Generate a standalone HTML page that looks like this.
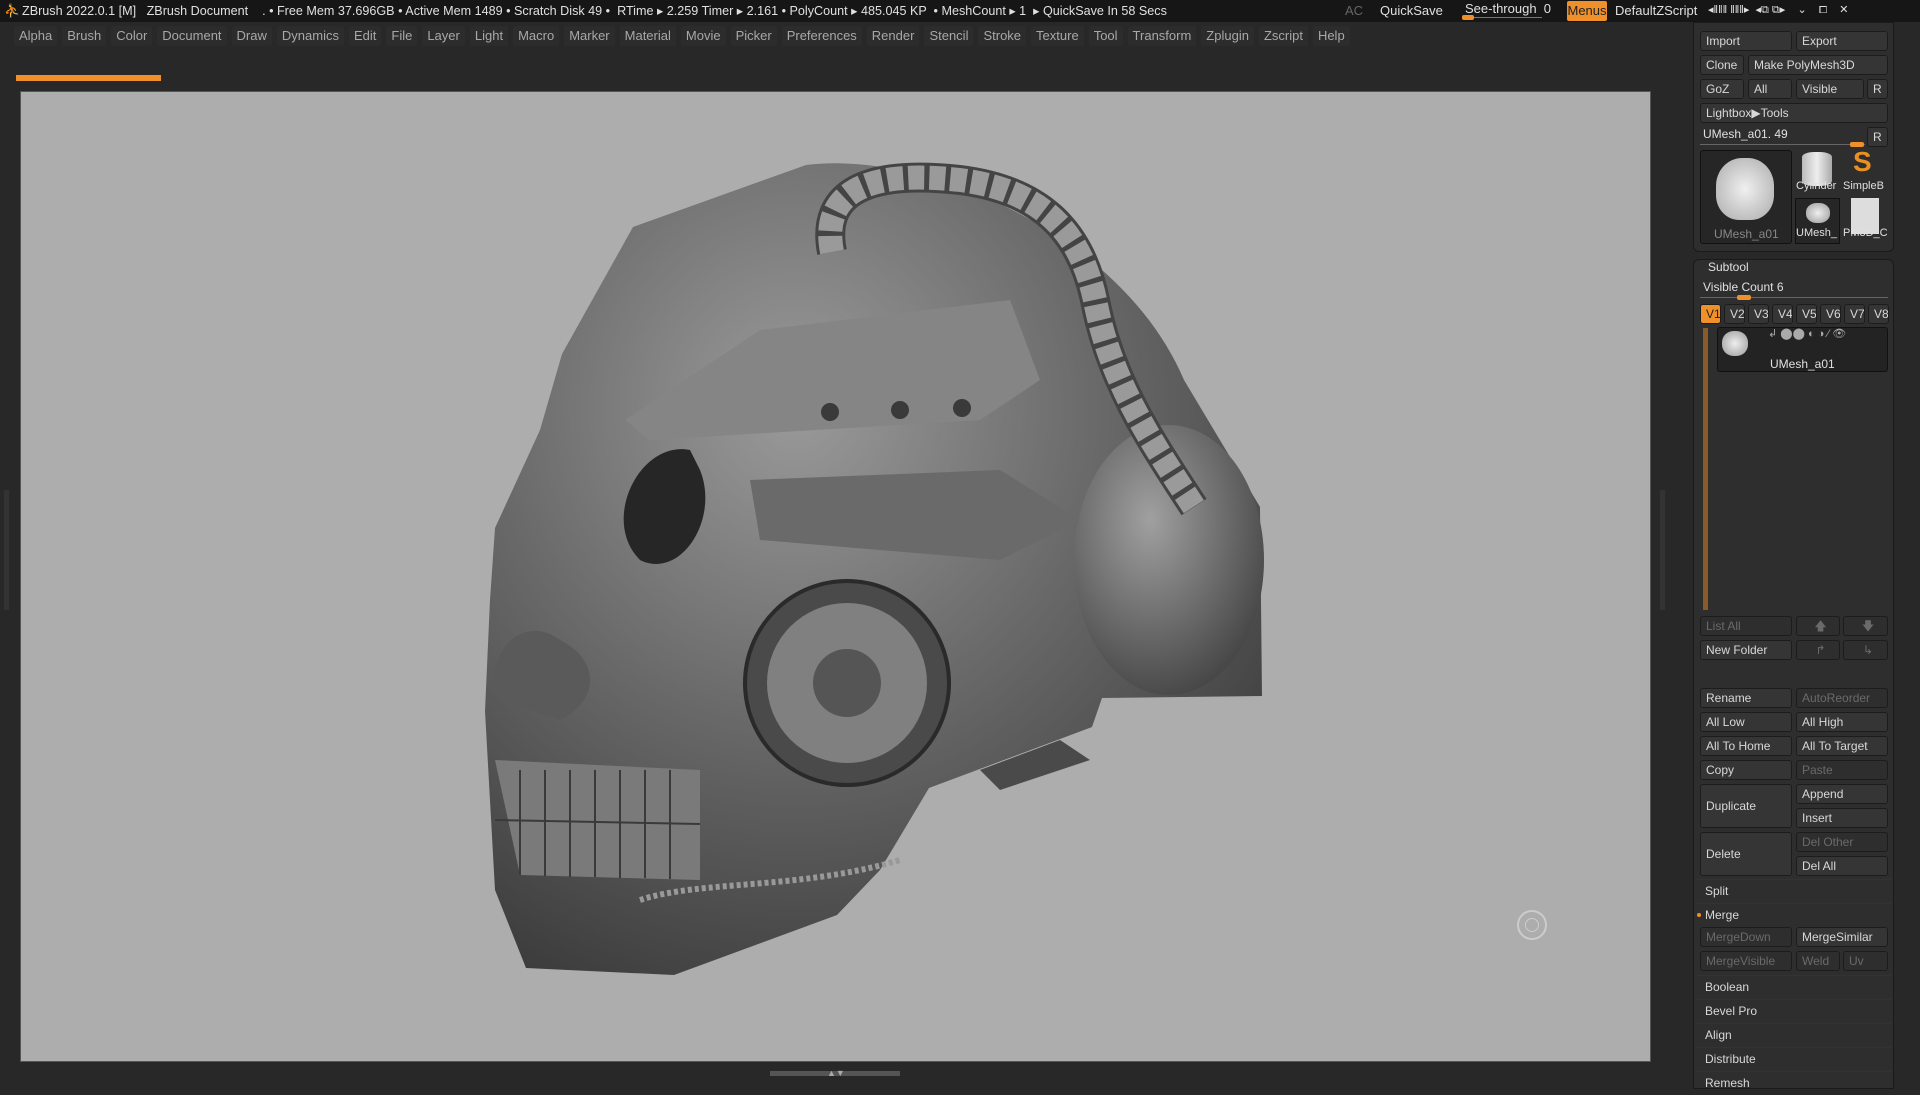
<!DOCTYPE html>
<html><head><meta charset="utf-8"><style>
*{margin:0;padding:0;box-sizing:border-box}
body{width:1920px;height:1080px;background:#282828;overflow:hidden;position:relative;font-family:"Liberation Sans",sans-serif;font-size:13px;color:#d0d0d0}
.top{position:absolute;left:0;top:0;width:1920px;height:22px;background:#161616;}
.t{position:absolute;top:3px;white-space:nowrap;font-size:13px;color:#e0e0e0}
.menu{position:absolute;left:14px;top:26px;display:flex;gap:5px}
.menu span{height:20px;line-height:20px;padding:0 5px;background:#2c2c2c;border-radius:3px;color:#a8a8a8;font-size:13px}
.vp{position:absolute;left:20px;top:91px;width:1631px;height:971px;background:#adadad;border:1px solid #555}
.b{position:absolute;height:20px;line-height:19px;padding-left:5px;background:#353535;border:1px solid #1c1c1c;border-radius:3px;font-size:12px;color:#d8d8d8;white-space:nowrap;overflow:hidden}
.d{color:#6a6a6a;background:#2e2e2e}
.row{position:absolute;left:1697px;width:194px;height:23px;line-height:23px;padding-left:8px;border-top:1px solid #333;font-size:12px;color:#d8d8d8}
</style></head><body>
<div class="top"></div>
<div class="t" style="left:4px;color:#ccc">⛹</div>
<div class="t" style="left:22px;font-size:12.6px">ZBrush 2022.0.1 [M]&nbsp;&nbsp; ZBrush Document &nbsp;&nbsp; . • Free Mem 37.696GB • Active Mem 1489 • Scratch Disk 49 • &nbsp;RTime ▸ 2.259 Timer ▸ 2.161 • PolyCount ▸ 485.045 KP &nbsp;• MeshCount ▸ 1 &nbsp;▸ QuickSave In 58 Secs</div>
<div class="t" style="left:1345px;color:#666">AC</div>
<div class="t" style="left:1380px">QuickSave</div>
<div class="t" style="left:1465px;top:1px">See-through&nbsp; 0</div>
<div style="position:absolute;left:1462px;top:17px;width:80px;height:1px;background:#777"></div>
<div style="position:absolute;left:1462px;top:15px;width:12px;height:5px;background:#f0902a;border-radius:2px"></div>
<div style="position:absolute;left:1567px;top:1px;width:40px;height:20px;background:#f0902a;border-radius:2px;color:#222;line-height:20px;text-align:center">Menus</div>
<div class="t" style="left:1615px">DefaultZScript</div>
<div class="t" style="left:1708px;font-size:11px">◂‖‖‖ ‖‖‖▸ &nbsp;◂⧉ ⧉▸ &nbsp;&nbsp; ⌄ &nbsp;&nbsp; ⧠ &nbsp;&nbsp; ✕</div>
<div class="menu"><span>Alpha</span><span>Brush</span><span>Color</span><span>Document</span><span>Draw</span><span>Dynamics</span><span>Edit</span><span>File</span><span>Layer</span><span>Light</span><span>Macro</span><span>Marker</span><span>Material</span><span>Movie</span><span>Picker</span><span>Preferences</span><span>Render</span><span>Stencil</span><span>Stroke</span><span>Texture</span><span>Tool</span><span>Transform</span><span>Zplugin</span><span>Zscript</span><span>Help</span></div>
<div style="position:absolute;left:16px;top:75px;width:145px;height:6px;background:#f0902a"></div>
<div class="vp"></div>
<div style="position:absolute;left:4px;top:490px;width:5px;height:120px;background:#333"></div>
<div style="position:absolute;left:1660px;top:490px;width:5px;height:120px;background:#333"></div>
<div style="position:absolute;left:770px;top:1071px;width:130px;height:5px;background:#555"></div>
<div style="position:absolute;left:827px;top:1068px;color:#aaa;font-size:9px">▲▼</div>
<svg style="position:absolute;left:0;top:0" width="1920" height="1080">
<defs>
<radialGradient id="g1" cx="0.4" cy="0.3" r="0.85"><stop offset="0" stop-color="#9a9a9a"/><stop offset="0.45" stop-color="#6a6a6a"/><stop offset="1" stop-color="#333"/></radialGradient>
<radialGradient id="g2" cx="0.4" cy="0.35" r="0.7"><stop offset="0" stop-color="#a0a0a0"/><stop offset="1" stop-color="#444"/></radialGradient>
</defs>
<path d="M806,165 C920,150 1120,230 1184,380 L1260,507 L1262,696 L1102,698 L1092,727 L929,788 L880,870 L837,915 L674,975 L526,968 L495,890 L485,711 L490,600 L495,528 L540,430 L562,354 L633,227 Z" fill="url(#g1)"/>
<ellipse cx="1169" cy="560" rx="95" ry="135" fill="url(#g2)"/>
<path d="M625,420 L760,330 L1010,300 L1040,380 L980,420 L650,440 Z" fill="#858585"/>
<g fill="#3a3a3a"><circle cx="830" cy="412" r="9"/><circle cx="900" cy="410" r="9"/><circle cx="962" cy="408" r="9"/><circle cx="810" cy="490" r="7"/><circle cx="850" cy="490" r="7"/><circle cx="900" cy="492" r="7"/></g>
<path d="M690,450 C640,440 600,520 640,560 C680,580 720,520 700,470Z" fill="#262626"/>
<path d="M750,480 L1000,470 L1080,520 L1000,560 L760,540 Z" fill="#6a6a6a"/>
<path d="M560,640 C520,610 480,660 500,700 L560,720 C600,700 600,660 560,640Z" fill="#5a5a5a"/>
<path d="M495,760 L700,770 L700,880 L520,875 Z" fill="#7a7a7a"/>
<g stroke="#3a3a3a" stroke-width="2">
<line x1="520" y1="770" x2="520" y2="875"/><line x1="545" y1="770" x2="545" y2="876"/><line x1="570" y1="770" x2="570" y2="877"/><line x1="595" y1="770" x2="595" y2="877"/><line x1="620" y1="770" x2="620" y2="878"/><line x1="645" y1="770" x2="645" y2="878"/><line x1="670" y1="770" x2="670" y2="879"/><line x1="495" y1="820" x2="700" y2="824"/>
</g>
<path d="M640,900 C700,880 800,890 900,860" stroke="#999" stroke-width="6" fill="none" stroke-dasharray="4 3"/>
<path d="M980,770 L1060,740 L1090,760 L1000,790Z" fill="#4a4a4a"/>
<circle cx="847" cy="683" r="102" fill="#4a4a4a" stroke="#2a2a2a" stroke-width="4"/>
<circle cx="847" cy="683" r="80" fill="#808080"/>
<circle cx="847" cy="683" r="34" fill="#555"/>
<path d="M832,252 C820,190 870,170 960,180 C1040,190 1080,230 1095,300 C1110,380 1150,440 1194,507" fill="none" stroke="#444" stroke-width="30"/>
<path d="M832,252 C820,190 870,170 960,180 C1040,190 1080,230 1095,300 C1110,380 1150,440 1194,507" fill="none" stroke="#9a9a9a" stroke-width="24" stroke-dasharray="16 5"/>
</svg>
<div style="position:absolute;left:1517px;top:910px;width:30px;height:30px;border:2px solid #ccc;border-radius:50%"></div>
<div style="position:absolute;left:1525px;top:918px;width:14px;height:14px;border:1px solid #ccc;border-radius:50%"></div>
<div style="position:absolute;left:1693px;top:22px;width:201px;height:230px;background:#2e2e2e;border-radius:0 0 6px 6px;border:1px solid #1a1a1a"></div>
<div class="b" style="left:1700px;top:31px;width:92px">Import</div>
<div class="b" style="left:1796px;top:31px;width:92px">Export</div>
<div class="b" style="left:1700px;top:55px;width:44px">Clone</div>
<div class="b" style="left:1748px;top:55px;width:140px">Make PolyMesh3D</div>
<div class="b" style="left:1700px;top:79px;width:44px">GoZ</div>
<div class="b" style="left:1748px;top:79px;width:44px">All</div>
<div class="b" style="left:1796px;top:79px;width:68px">Visible</div>
<div class="b" style="left:1867px;top:79px;width:21px">R</div>
<div class="b" style="left:1700px;top:103px;width:188px">Lightbox▶Tools</div>
<div class="t" style="left:1703px;top:127px;font-size:12px">UMesh_a01. 49</div>
<div style="position:absolute;left:1700px;top:144px;width:165px;height:1px;background:#666"></div>
<div style="position:absolute;left:1850px;top:142px;width:14px;height:5px;background:#f0902a;border-radius:2px"></div>
<div class="b" style="left:1867px;top:127px;width:21px">R</div>
<div style="position:absolute;left:1700px;top:150px;width:92px;height:94px;background:#262626;border:1px solid #111;border-radius:3px"></div>
<div style="position:absolute;left:1716px;top:158px;width:58px;height:62px;background:radial-gradient(#f0f0f0,#aaa);border-radius:45% 45% 40% 40%"></div>
<div class="t" style="left:1714px;top:227px;font-size:12px;color:#888">UMesh_a01</div>
<div style="position:absolute;left:1802px;top:152px;width:30px;height:34px;background:linear-gradient(90deg,#bbb,#eee,#aaa);border-radius:40%/15%"></div>
<div class="t" style="left:1796px;top:180px;font-size:11px">Cylinder</div>
<div class="t" style="left:1853px;top:146px;font-size:28px;color:#e89020;font-weight:bold">S</div>
<div class="t" style="left:1843px;top:180px;font-size:11px">SimpleB</div>
<div style="position:absolute;left:1795px;top:198px;width:45px;height:46px;border:1px solid #111;background:#262626"></div>
<div style="position:absolute;left:1806px;top:203px;width:24px;height:20px;background:radial-gradient(#eee,#999);border-radius:45%"></div>
<div class="t" style="left:1796px;top:227px;font-size:11px">UMesh_</div>
<div style="position:absolute;left:1851px;top:198px;width:28px;height:36px;background:#ddd"></div>
<div class="t" style="left:1843px;top:227px;font-size:11px">PM3D_C</div>
<div style="position:absolute;left:1693px;top:259px;width:201px;height:830px;background:#2e2e2e;border-radius:6px 6px 0 0;border:1px solid #1a1a1a"></div>
<div class="t" style="left:1708px;top:260px;font-size:12px">Subtool</div>
<div class="t" style="left:1703px;top:280px;font-size:12px">Visible Count 6</div>
<div style="position:absolute;left:1700px;top:297px;width:188px;height:1px;background:#666"></div>
<div style="position:absolute;left:1737px;top:295px;width:14px;height:5px;background:#f0902a;border-radius:2px"></div>
<div class="b" style="left:1700px;top:304px;width:21px;background:#f0902a;color:#222">V1</div>
<div class="b" style="left:1724px;top:304px;width:21px">V2</div>
<div class="b" style="left:1748px;top:304px;width:21px">V3</div>
<div class="b" style="left:1772px;top:304px;width:21px">V4</div>
<div class="b" style="left:1796px;top:304px;width:21px">V5</div>
<div class="b" style="left:1820px;top:304px;width:21px">V6</div>
<div class="b" style="left:1844px;top:304px;width:21px">V7</div>
<div class="b" style="left:1868px;top:304px;width:21px">V8</div>
<div style="position:absolute;left:1703px;top:328px;width:5px;height:282px;background:#8a5a2a"></div>
<div style="position:absolute;left:1717px;top:327px;width:171px;height:45px;background:#232323;border:1px solid #111;border-radius:3px"></div>
<div style="position:absolute;left:1722px;top:331px;width:26px;height:25px;background:radial-gradient(#eee,#999);border-radius:45%"></div>
<div class="t" style="left:1770px;top:357px;font-size:12px">UMesh_a01</div>
<div class="t" style="left:1768px;top:327px;font-size:11px;color:#aaa">↲ ⬤⬤ ◐ ◑ ⁄ 👁</div>
<div class="b d" style="left:1700px;top:616px;width:92px">List All</div>
<div class="b d" style="left:1796px;top:616px;width:44px;text-align:center">🡅</div>
<div class="b d" style="left:1843px;top:616px;width:45px;text-align:center">🡇</div>
<div class="b" style="left:1700px;top:640px;width:92px">New Folder</div>
<div class="b d" style="left:1796px;top:640px;width:44px;text-align:center">↱</div>
<div class="b d" style="left:1843px;top:640px;width:45px;text-align:center">↳</div>
<div class="b" style="left:1700px;top:688px;width:92px">Rename</div>
<div class="b d" style="left:1796px;top:688px;width:92px">AutoReorder</div>
<div class="b" style="left:1700px;top:712px;width:92px">All Low</div>
<div class="b" style="left:1796px;top:712px;width:92px">All High</div>
<div class="b" style="left:1700px;top:736px;width:92px">All To Home</div>
<div class="b" style="left:1796px;top:736px;width:92px">All To Target</div>
<div class="b" style="left:1700px;top:760px;width:92px">Copy</div>
<div class="b d" style="left:1796px;top:760px;width:92px">Paste</div>
<div class="b" style="left:1700px;top:784px;width:92px;height:44px;line-height:43px">Duplicate</div>
<div class="b" style="left:1796px;top:784px;width:92px">Append</div>
<div class="b" style="left:1796px;top:808px;width:92px">Insert</div>
<div class="b" style="left:1700px;top:832px;width:92px;height:44px;line-height:43px">Delete</div>
<div class="b d" style="left:1796px;top:832px;width:92px">Del Other</div>
<div class="b" style="left:1796px;top:856px;width:92px">Del All</div>
<div class="row" style="top:879px">Split</div>
<div class="row" style="top:903px">Merge</div>
<div style="position:absolute;left:1697px;top:913px;width:4px;height:4px;background:#f0902a;border-radius:50%"></div>
<div class="b d" style="left:1700px;top:927px;width:92px">MergeDown</div>
<div class="b" style="left:1796px;top:927px;width:92px">MergeSimilar</div>
<div class="b d" style="left:1700px;top:951px;width:92px">MergeVisible</div>
<div class="b d" style="left:1796px;top:951px;width:44px">Weld</div>
<div class="b d" style="left:1843px;top:951px;width:45px">Uv</div>
<div class="row" style="top:975px">Boolean</div>
<div class="row" style="top:999px">Bevel Pro</div>
<div class="row" style="top:1023px">Align</div>
<div class="row" style="top:1047px">Distribute</div>
<div class="row" style="top:1071px">Remesh</div>
</body></html>
